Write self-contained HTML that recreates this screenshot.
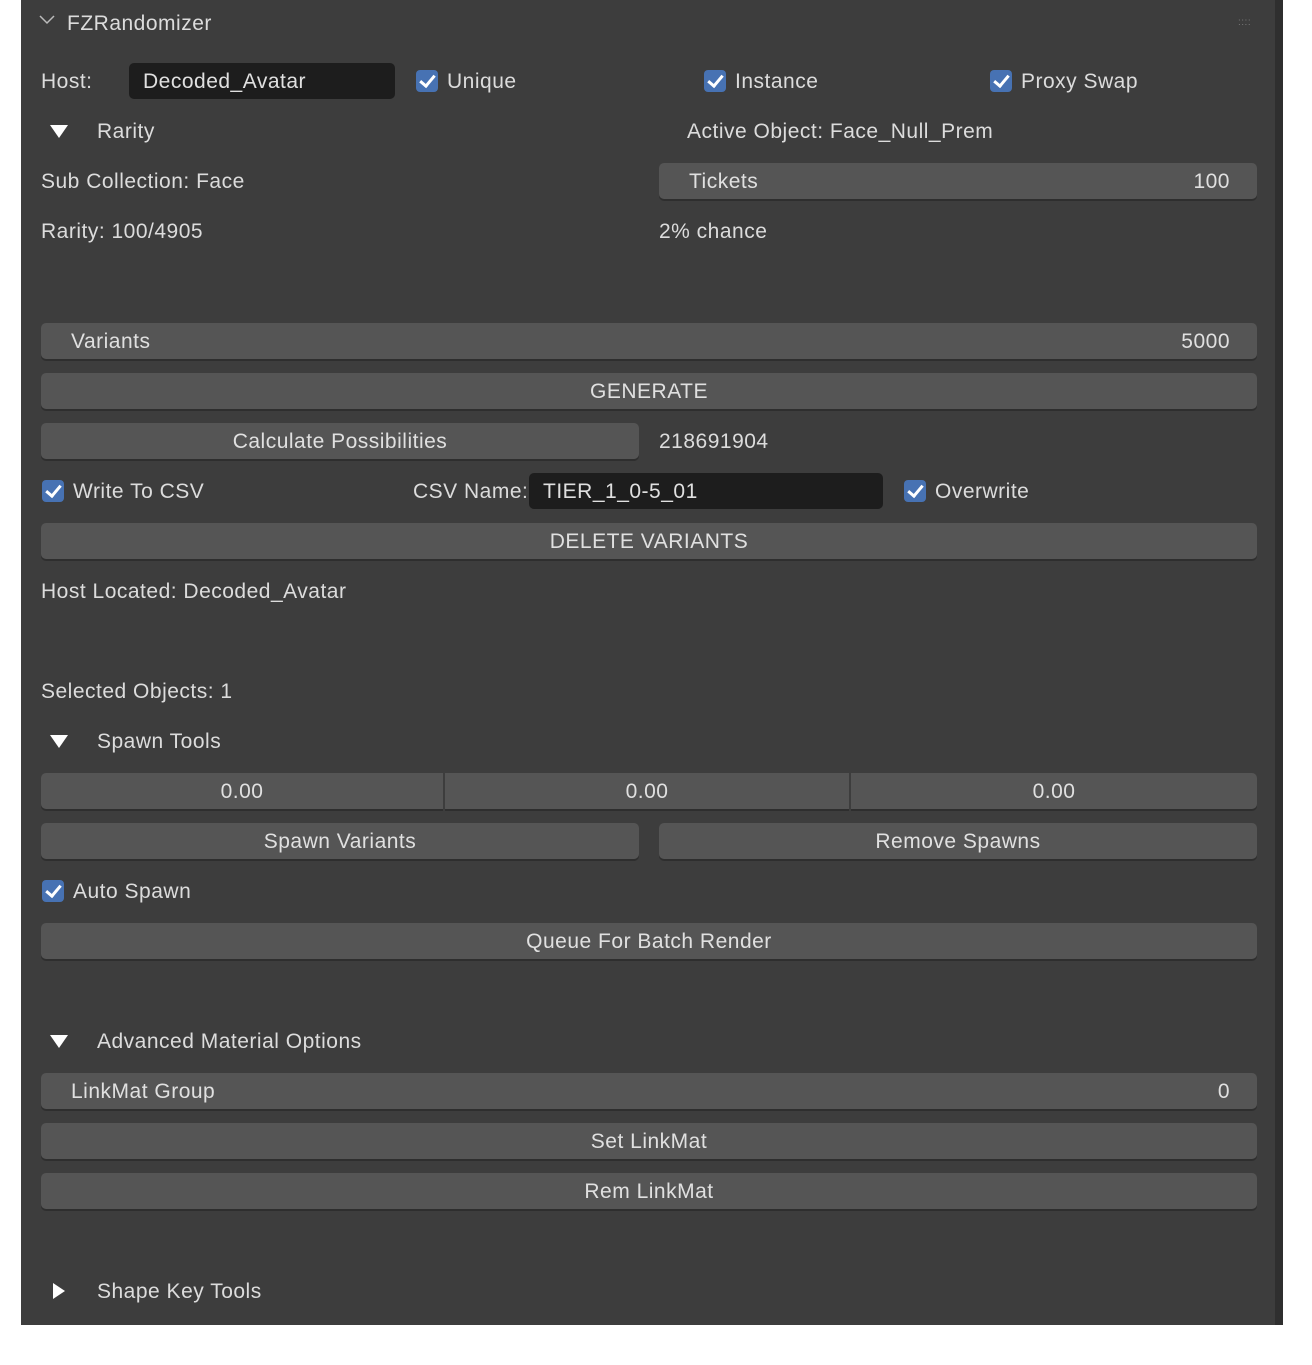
<!DOCTYPE html><html><head><style>
body{margin:0;width:1312px;height:1365px;background:#fff;position:relative;font-family:"Liberation Sans",sans-serif;font-size:21px;color:#dcdcdc;overflow:hidden;letter-spacing:0.5px}
#p{position:absolute;left:21px;top:0;width:1254px;height:1325px;background:#3d3d3d;border-right:8px solid #2f2f2f}
.t{position:absolute;white-space:nowrap;line-height:24px;margin-top:1px}
.b{position:absolute;height:36px;background:#555;border-radius:5px;box-shadow:0 2px 0 #2e2e2e;line-height:38px;text-align:center;color:#e0e0e0}
.f{position:absolute;height:36px;background:#1d1d1d;border-radius:5px;line-height:38px;padding-left:14px;box-sizing:border-box;color:#e0e0e0}
.c{position:absolute;width:22px;height:22px;background:#4772b3;border-radius:4px}
.c:after{content:"";position:absolute;left:7px;top:2px;width:6px;height:12px;border:solid #fff;border-width:0 3px 3px 0;transform:rotate(40deg)}
.tri{position:absolute;width:0;height:0;border-left:9px solid transparent;border-right:9px solid transparent;border-top:13px solid #fff}
.tr{position:absolute;width:0;height:0;border-top:8px solid transparent;border-bottom:8px solid transparent;border-left:12px solid #fff}
</style></head><body><div id="p"></div>
<svg style="position:absolute;left:39px;top:15px" width="16" height="10"><path d="M1 1 L8 8 L15 1" stroke="#bbb" stroke-width="1.5" fill="none"/></svg>
<div class="t" style="left:67px;top:11px">FZRandomizer</div>
<div class="t" style="left:1238px;top:10px;font-size:10px;color:#777">::::</div>
<div class="t" style="left:41px;top:69px">Host:</div>
<div class="f" style="left:129px;top:63px;width:266px">Decoded_Avatar</div>
<div class="c" style="left:416px;top:70px"></div><div class="t" style="left:447px;top:69px">Unique</div>
<div class="c" style="left:704px;top:70px"></div><div class="t" style="left:735px;top:69px">Instance</div>
<div class="c" style="left:990px;top:70px"></div><div class="t" style="left:1021px;top:69px">Proxy Swap</div>
<div class="tri" style="left:50px;top:125px"></div><div class="t" style="left:97px;top:119px">Rarity</div>
<div class="t" style="left:687px;top:119px">Active Object: Face_Null_Prem</div>
<div class="t" style="left:41px;top:169px">Sub Collection: Face</div>
<div class="b" style="left:659px;top:163px;width:598px"><span style="position:absolute;left:30px">Tickets</span><span style="position:absolute;right:27px">100</span></div>
<div class="t" style="left:41px;top:219px">Rarity: 100/4905</div>
<div class="t" style="left:659px;top:219px">2% chance</div>
<div class="b" style="left:41px;top:323px;width:1216px"><span style="position:absolute;left:30px">Variants</span><span style="position:absolute;right:27px">5000</span></div>
<div class="b" style="left:41px;top:373px;width:1216px">GENERATE</div>
<div class="b" style="left:41px;top:423px;width:598px">Calculate Possibilities</div>
<div class="t" style="left:659px;top:429px">218691904</div>
<div class="c" style="left:42px;top:480px"></div><div class="t" style="left:73px;top:479px">Write To CSV</div>
<div class="t" style="left:413px;top:479px">CSV Name:</div>
<div class="f" style="left:529px;top:473px;width:354px">TIER_1_0-5_01</div>
<div class="c" style="left:904px;top:480px"></div><div class="t" style="left:935px;top:479px">Overwrite</div>
<div class="b" style="left:41px;top:523px;width:1216px">DELETE VARIANTS</div>
<div class="t" style="left:41px;top:579px">Host Located: Decoded_Avatar</div>
<div class="t" style="left:41px;top:679px">Selected Objects: 1</div>
<div class="tri" style="left:50px;top:735px"></div><div class="t" style="left:97px;top:729px">Spawn Tools</div>
<div class="b" style="left:41px;top:773px;width:402px;border-radius:5px 0 0 5px">0.00</div>
<div class="b" style="left:445px;top:773px;width:404px;border-radius:0">0.00</div>
<div class="b" style="left:851px;top:773px;width:406px;border-radius:0 5px 5px 0">0.00</div>
<div class="b" style="left:41px;top:823px;width:598px">Spawn Variants</div>
<div class="b" style="left:659px;top:823px;width:598px">Remove Spawns</div>
<div class="c" style="left:42px;top:880px"></div><div class="t" style="left:73px;top:879px">Auto Spawn</div>
<div class="b" style="left:41px;top:923px;width:1216px">Queue For Batch Render</div>
<div class="tri" style="left:50px;top:1035px"></div><div class="t" style="left:97px;top:1029px">Advanced Material Options</div>
<div class="b" style="left:41px;top:1073px;width:1216px"><span style="position:absolute;left:30px">LinkMat Group</span><span style="position:absolute;right:27px">0</span></div>
<div class="b" style="left:41px;top:1123px;width:1216px">Set LinkMat</div>
<div class="b" style="left:41px;top:1173px;width:1216px">Rem LinkMat</div>
<div class="tr" style="left:53px;top:1283px"></div><div class="t" style="left:97px;top:1279px">Shape Key Tools</div>
</body></html>
